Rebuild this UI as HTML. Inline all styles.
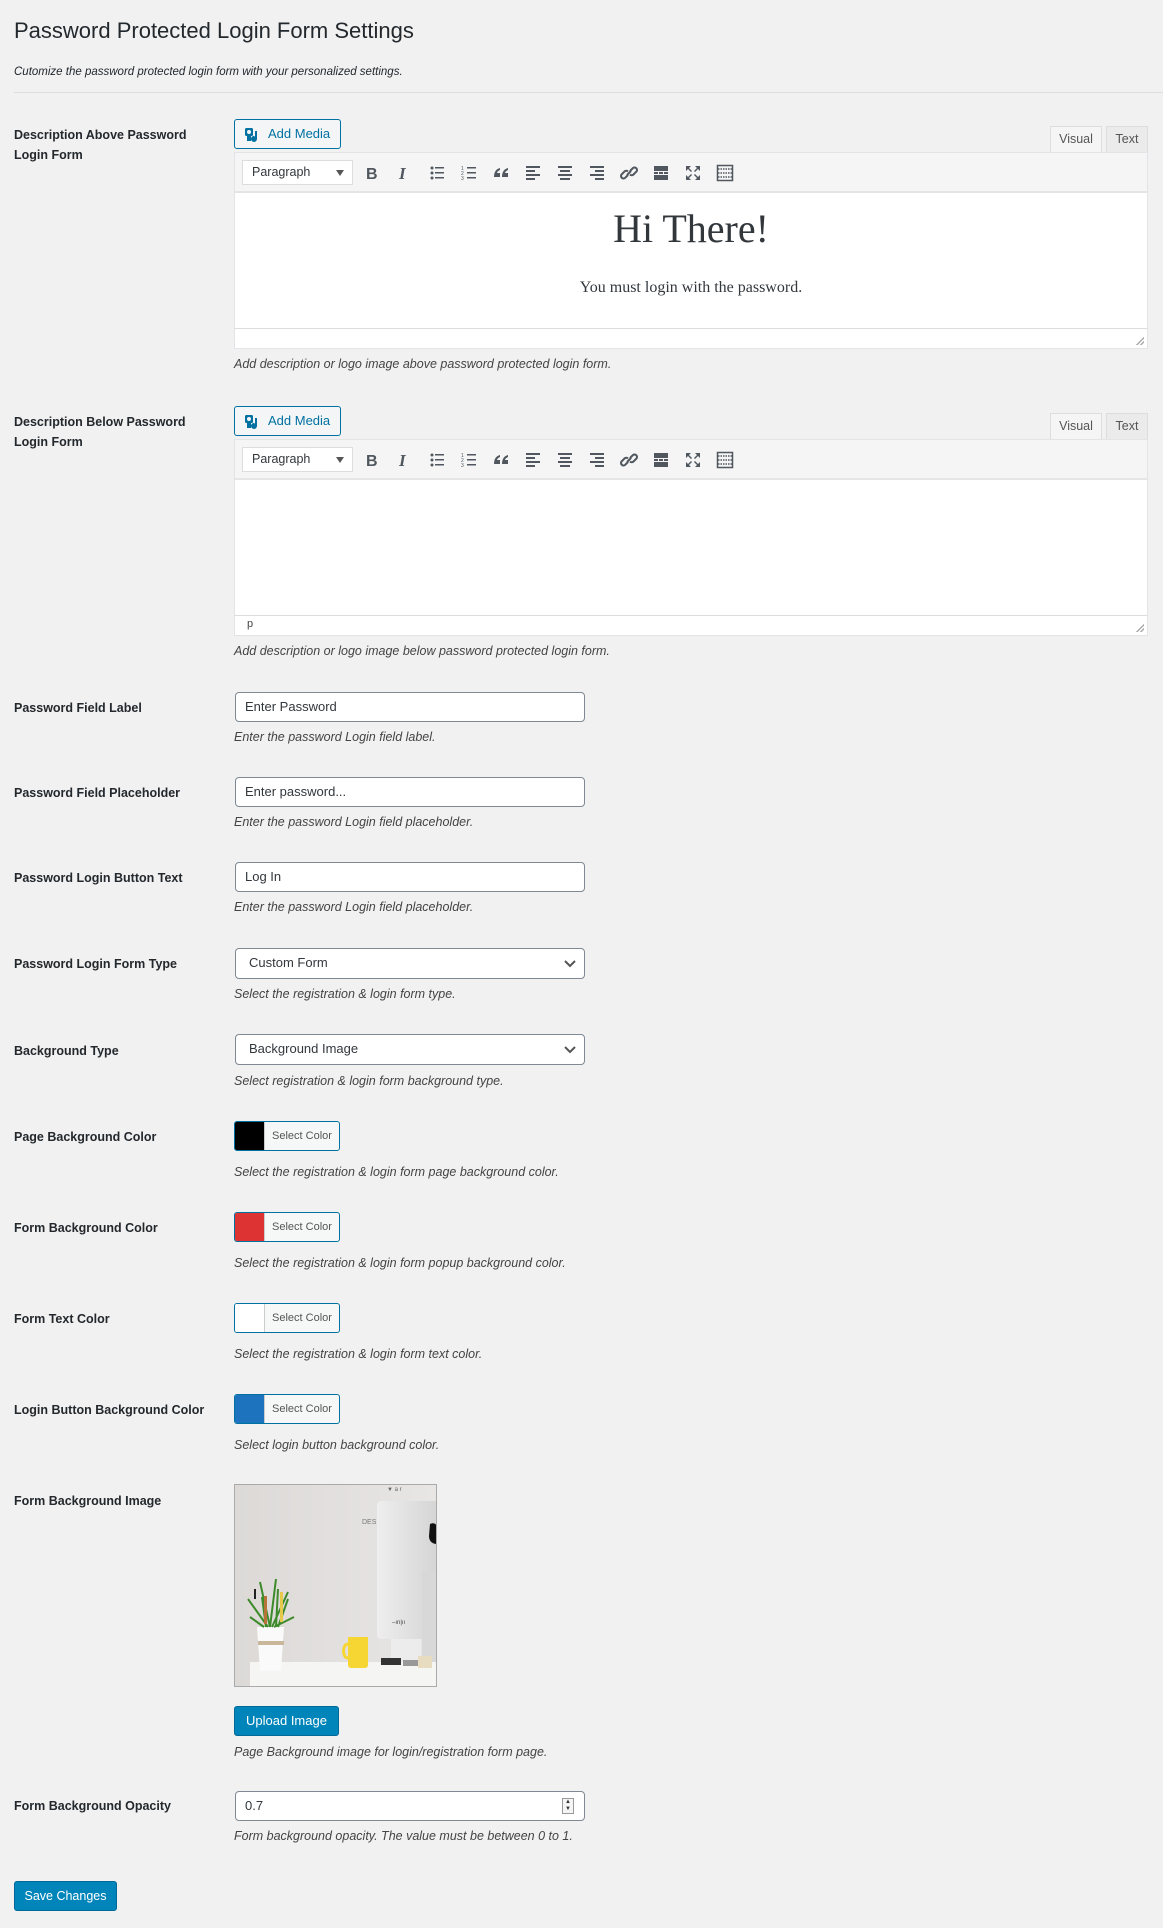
<!DOCTYPE html>
<html><head><meta charset="utf-8"><style>
*{box-sizing:border-box;margin:0;padding:0}
body{width:1163px;height:1928px;background:#f1f1f1;font-family:"Liberation Sans",sans-serif;color:#23282d;position:relative;overflow:hidden;font-size:13px}
.a{position:absolute}
h1{position:absolute;left:14px;top:18px;font-size:22px;font-weight:400;color:#23282d}
.sub{left:14px;top:66px;font-style:italic;font-size:11.5px;color:#23282d}
.hr{left:14px;right:0;top:92px;height:1px;background:#ddd}
.lbl{left:14px;font-size:12.5px;font-weight:bold;line-height:20px;color:#23282d}
.help{left:234px;font-style:italic;font-size:12.5px;color:#444}
.am{left:234px;width:107px;height:30px;border:1px solid #0071a1;border-radius:3px;background:#f3f5f6;color:#0071a1;font-size:13px;line-height:28px;padding-left:33px}
.am svg{position:absolute;left:9px;top:6px}
.tab{height:26px;border:1px solid #ddd;border-bottom:none;font-size:12.5px;line-height:25px;text-align:center;color:#555}
.tb{left:234px;width:914px;height:41px;background:#f5f5f5;border:1px solid #e2e4e7;border-bottom:2px solid #e5e5e5}
.para{left:7px;top:7px;width:111px;height:25px;background:#fff;border:1px solid #ddd;font-size:12.5px;color:#32373c;line-height:23px;padding-left:9px}
.para:after{content:"";position:absolute;right:8px;top:9px;border:4px solid transparent;border-top:6px solid #555}
.ic{top:10px}
.ct{left:234px;width:914px;background:#fff;border-left:1px solid #e2e4e7;border-right:1px solid #e2e4e7}
.st{left:234px;width:914px;height:21px;background:#fff;border:1px solid #e2e4e7;border-top:1px solid #ddd}
.st:after{content:"";position:absolute;right:3px;bottom:3px;width:8px;height:8px;background:linear-gradient(135deg,transparent 50%,#aaa 50%,#aaa 60%,transparent 60%,transparent 75%,#aaa 75%,#aaa 85%,transparent 85%)}
.in{left:235px;width:350px;height:30px;background:#fff;border:1px solid #7e8993;border-radius:4px;font-size:13px;line-height:28px;padding-left:9px;color:#32373c}
.sel{padding-left:13px}
.sel svg{position:absolute;right:8px;top:10px}
.cb{left:234px;width:106px;height:30px;border:1px solid #0071a1;border-radius:3px;background:#f6f7f7;overflow:hidden}
.cb i{position:absolute;left:0;top:0;width:30px;height:28px;border-right:1px solid #ccc}
.cb span{position:absolute;left:37px;top:8px;font-size:11px;color:#555}
.btn{background:#0085ba;border:1px solid #006799;border-radius:3px;color:#fff;font-size:13px;line-height:28px;text-align:center;height:30px}
</style></head><body>
<h1>Password Protected Login Form Settings</h1>
<div class="a sub">Cutomize the password protected login form with your personalized settings.</div>
<div class="a hr"></div>

<div class="a lbl" style="top:125px">Description Above Password<br>Login Form</div>
<div class="a am" style="top:119px"><svg width="18" height="18" viewBox="0 0 18 18"><rect x="1" y="2" width="8" height="8" rx="1.5" fill="#0071a1"/><circle cx="5" cy="6" r="2" fill="#f3f5f6"/><rect x="3" y="10" width="4" height="5" fill="#0071a1"/><path d="M12 5v8a2 2 0 1 1-1.5-2" stroke="#0071a1" stroke-width="2" fill="none"/><circle cx="10" cy="13" r="2" fill="#0071a1"/></svg>Add Media</div>
<div class="a tab" style="left:1050px;top:126px;width:52px;background:#f5f5f5">Visual</div>
<div class="a tab" style="left:1106px;top:126px;width:42px;background:#ebebeb">Text</div>
<div class="a tb" style="top:152px" id="tb1"></div>
<div class="a ct" style="top:193px;height:135px">
<div style="position:absolute;left:0;right:0;top:12px;text-align:center;font-family:'Liberation Serif',serif;font-size:40px;color:#32373c">Hi There!</div>
<div style="position:absolute;left:0;right:0;top:86px;text-align:center;font-family:'Liberation Serif',serif;font-size:16px;color:#32373c">You must login with the password.</div>
</div>
<div class="a st" style="top:328px"></div>
<div class="a help" style="top:357px">Add description or logo image above password protected login form.</div>

<div class="a lbl" style="top:412px">Description Below Password<br>Login Form</div>
<div class="a am" style="top:406px"><svg width="18" height="18" viewBox="0 0 18 18"><rect x="1" y="2" width="8" height="8" rx="1.5" fill="#0071a1"/><circle cx="5" cy="6" r="2" fill="#f3f5f6"/><rect x="3" y="10" width="4" height="5" fill="#0071a1"/><path d="M12 5v8a2 2 0 1 1-1.5-2" stroke="#0071a1" stroke-width="2" fill="none"/><circle cx="10" cy="13" r="2" fill="#0071a1"/></svg>Add Media</div>
<div class="a tab" style="left:1050px;top:413px;width:52px;background:#f5f5f5">Visual</div>
<div class="a tab" style="left:1106px;top:413px;width:42px;background:#ebebeb">Text</div>
<div class="a tb" style="top:439px" id="tb2"></div>
<div class="a ct" style="top:480px;height:135px"></div>
<div class="a st" style="top:615px"><span style="position:absolute;left:12px;top:2px;font-size:11px;color:#444">p</span></div>
<div class="a help" style="top:644px">Add description or logo image below password protected login form.</div>

<div class="a lbl" style="top:698px">Password Field Label</div>
<div class="a in" style="top:692px">Enter Password</div>
<div class="a help" style="top:730px">Enter the password Login field label.</div>

<div class="a lbl" style="top:783px">Password Field Placeholder</div>
<div class="a in" style="top:777px">Enter password...</div>
<div class="a help" style="top:815px">Enter the password Login field placeholder.</div>

<div class="a lbl" style="top:868px">Password Login Button Text</div>
<div class="a in" style="top:862px">Log In</div>
<div class="a help" style="top:900px">Enter the password Login field placeholder.</div>

<div class="a lbl" style="top:954px">Password Login Form Type</div>
<div class="a in sel" style="top:948px;height:31px">Custom Form<svg width="12" height="10" viewBox="0 0 12 10"><path d="M1 2l5 5 5-5" stroke="#555" stroke-width="2" fill="none"/></svg></div>
<div class="a help" style="top:987px">Select the registration &amp; login form type.</div>

<div class="a lbl" style="top:1041px">Background Type</div>
<div class="a in sel" style="top:1034px;height:31px">Background Image<svg width="12" height="10" viewBox="0 0 12 10"><path d="M1 2l5 5 5-5" stroke="#555" stroke-width="2" fill="none"/></svg></div>
<div class="a help" style="top:1074px">Select registration &amp; login form background type.</div>

<div class="a lbl" style="top:1127px">Page Background Color</div>
<div class="a cb" style="top:1121px"><i style="background:#000"></i><span>Select Color</span></div>
<div class="a help" style="top:1165px">Select the registration &amp; login form page background color.</div>

<div class="a lbl" style="top:1218px">Form Background Color</div>
<div class="a cb" style="top:1212px"><i style="background:#dd3333"></i><span>Select Color</span></div>
<div class="a help" style="top:1256px">Select the registration &amp; login form popup background color.</div>

<div class="a lbl" style="top:1309px">Form Text Color</div>
<div class="a cb" style="top:1303px"><i style="background:#fff"></i><span>Select Color</span></div>
<div class="a help" style="top:1347px">Select the registration &amp; login form text color.</div>

<div class="a lbl" style="top:1400px">Login Button Background Color</div>
<div class="a cb" style="top:1394px"><i style="background:#1e73be"></i><span>Select Color</span></div>
<div class="a help" style="top:1438px">Select login button background color.</div>

<div class="a lbl" style="top:1491px">Form Background Image</div>
<svg class="a" style="left:234px;top:1484px" width="203" height="203" viewBox="0 0 203 203">
<defs><linearGradient id="bg" x1="0" x2="1"><stop offset="0" stop-color="#dcd9d7"/><stop offset="1" stop-color="#e8e6e5"/></linearGradient><linearGradient id="mon" x1="0" x2="1"><stop offset="0" stop-color="#eeeeee"/><stop offset="1" stop-color="#d4d4d4"/></linearGradient></defs>
<rect width="203" height="203" fill="url(#bg)"/>
<rect x="143" y="17" width="62" height="138" rx="4" fill="url(#mon)"/>
<path d="M196 40c4-2 7 0 7 4v16c-4 0-8-2-8-8z" fill="#111"/>
<rect x="188" y="87" width="15" height="95" fill="#d8d8d8"/>
<rect x="157" y="155" width="30" height="25" fill="#ececec"/>
<text x="128" y="40" font-size="7" fill="#777" font-family="Liberation Sans">DES</text>
<text x="153" y="7" font-size="6" fill="#666" font-family="Liberation Sans">▼ a r</text>
<text x="158" y="140" font-size="6" fill="#444" font-family="Liberation Sans">–ın|ıı</text>
<rect x="16" y="178" width="187" height="25" fill="#f5f5f4"/>
<rect x="147" y="174" width="20" height="7" fill="#333"/>
<rect x="169" y="176" width="15" height="6" fill="#999"/>
<rect x="184" y="172" width="14" height="12" fill="#e8dcc0"/>
<path d="M23 143h27l-3 44h-21z" fill="#fafafa"/>
<rect x="24" y="157" width="26" height="4" fill="#c8b79a"/>
<g stroke="#3d8a2a" stroke-width="2" fill="none"><path d="M36 143l-10-45"/><path d="M36 143l6-48"/><path d="M38 143l16-35"/><path d="M34 143l-20-28"/><path d="M40 143l20-10"/><path d="M32 143l-4-30"/><path d="M42 143l2-38"/><path d="M30 143l-14-10"/><path d="M44 143l10-28"/></g>
<rect x="46" y="108" width="3" height="30" fill="#e6c94a"/><rect x="30" y="112" width="3" height="28" fill="#b8733a"/><rect x="20" y="105" width="2" height="10" fill="#222"/>
<path d="M114 153h20v28a3 3 0 0 1-3 3h-14a3 3 0 0 1-3-3z" fill="#f5d632"/>
<path d="M114 160c-6 0-6 14 0 14" stroke="#f5d632" stroke-width="3" fill="none"/>
<rect x="0.5" y="0.5" width="202" height="202" fill="none" stroke="#aaa"/>
</svg>
<div class="a btn" style="left:234px;top:1706px;width:105px">Upload Image</div>
<div class="a help" style="top:1745px">Page Background image for login/registration form page.</div>

<div class="a lbl" style="top:1796px">Form Background Opacity</div>
<div class="a in" style="top:1791px">0.7<span style="position:absolute;right:10px;top:6px;width:12px;height:16px;border:1px solid #999;background:#f5f5f5;font-size:6px;line-height:7px;text-align:center;color:#333">▲<br>▼</span></div>
<div class="a help" style="top:1829px">Form background opacity. The value must be between 0 to 1.</div>

<div class="a btn" style="left:14px;top:1881px;width:103px;font-size:12.5px">Save Changes</div>

<template id="tpl">
<div class="a para">Paragraph</div>
<svg class="a ic" style="left:127px" width="20" height="20" viewBox="0 0 20 20"><text x="4" y="16" font-family="Liberation Sans" font-weight="bold" font-size="16" fill="#50575e">B</text></svg>
<svg class="a ic" style="left:159px" width="20" height="20" viewBox="0 0 20 20"><text x="5" y="16" font-family="Liberation Serif" font-style="italic" font-weight="bold" font-size="17" fill="#50575e">I</text></svg>
<svg class="a ic" style="left:192px" width="20" height="20" viewBox="0 0 20 20" fill="#50575e"><circle cx="5" cy="5" r="1.5"/><circle cx="5" cy="10" r="1.5"/><circle cx="5" cy="15" r="1.5"/><rect x="8" y="4" width="9" height="1.5"/><rect x="8" y="9" width="9" height="1.5"/><rect x="8" y="14" width="9" height="1.5"/></svg>
<svg class="a ic" style="left:224px" width="20" height="20" viewBox="0 0 20 20" fill="#50575e"><text x="2" y="7" font-size="5" font-family="Liberation Sans">1</text><text x="2" y="12" font-size="5" font-family="Liberation Sans">2</text><text x="2" y="17" font-size="5" font-family="Liberation Sans">3</text><rect x="8" y="4" width="9" height="1.5"/><rect x="8" y="9" width="9" height="1.5"/><rect x="8" y="14" width="9" height="1.5"/></svg>
<svg class="a ic" style="left:256px" width="20" height="20" viewBox="0 0 20 20" fill="#50575e"><path d="M3 14c0-5 2-8 6-9v2c-2 1-3 2-3 3h3v4zM11 14c0-5 2-8 6-9v2c-2 1-3 2-3 3h3v4z"/></svg>
<svg class="a ic" style="left:288px" width="20" height="20" viewBox="0 0 20 20" fill="#50575e"><rect x="3" y="3" width="14" height="2"/><rect x="3" y="7" width="9" height="2"/><rect x="3" y="11" width="14" height="2"/><rect x="3" y="15" width="9" height="2"/></svg>
<svg class="a ic" style="left:320px" width="20" height="20" viewBox="0 0 20 20" fill="#50575e"><rect x="3" y="3" width="14" height="2"/><rect x="5" y="7" width="10" height="2"/><rect x="3" y="11" width="14" height="2"/><rect x="5" y="15" width="10" height="2"/></svg>
<svg class="a ic" style="left:352px" width="20" height="20" viewBox="0 0 20 20" fill="#50575e"><rect x="3" y="3" width="14" height="2"/><rect x="8" y="7" width="9" height="2"/><rect x="3" y="11" width="14" height="2"/><rect x="8" y="15" width="9" height="2"/></svg>
<svg class="a ic" style="left:384px" width="20" height="20" viewBox="0 0 20 20" fill="none" stroke="#50575e" stroke-width="2"><path d="M9 12l-3 3a2.5 2.5 0 0 1-3.5-3.5l3-3a2.5 2.5 0 0 1 3.5 0"/><path d="M11 8l3-3a2.5 2.5 0 0 1 3.5 3.5l-3 3a2.5 2.5 0 0 1-3.5 0"/><path d="M8 12l4-4"/></svg>
<svg class="a ic" style="left:416px" width="20" height="20" viewBox="0 0 20 20" fill="#50575e"><rect x="3" y="3" width="14" height="5"/><rect x="3" y="9" width="4" height="2"/><rect x="8" y="9" width="4" height="2"/><rect x="13" y="9" width="4" height="2"/><rect x="3" y="12" width="14" height="5"/></svg>
<svg class="a ic" style="left:448px" width="20" height="20" viewBox="0 0 20 20" fill="#50575e"><path d="M3 3h5l-2 2 3 3-1 1-3-3-2 2zM17 3v5l-2-2-3 3-1-1 3-3-2-2zM3 17v-5l2 2 3-3 1 1-3 3 2 2zM17 17h-5l2-2-3-3 1-1 3 3 2-2z"/></svg>
<svg class="a ic" style="left:480px" width="20" height="20" viewBox="0 0 20 20" fill="none" stroke="#50575e" stroke-width="1.5"><rect x="2.5" y="2.5" width="15" height="15"/><path d="M3 6h14M3 10h14M3 14h14" stroke-dasharray="1.5 1"/></svg>
</template>
<script>
var t=document.getElementById('tpl').innerHTML;
document.getElementById('tb1').innerHTML=t;document.getElementById('tb2').innerHTML=t;
</script>
</body></html>
